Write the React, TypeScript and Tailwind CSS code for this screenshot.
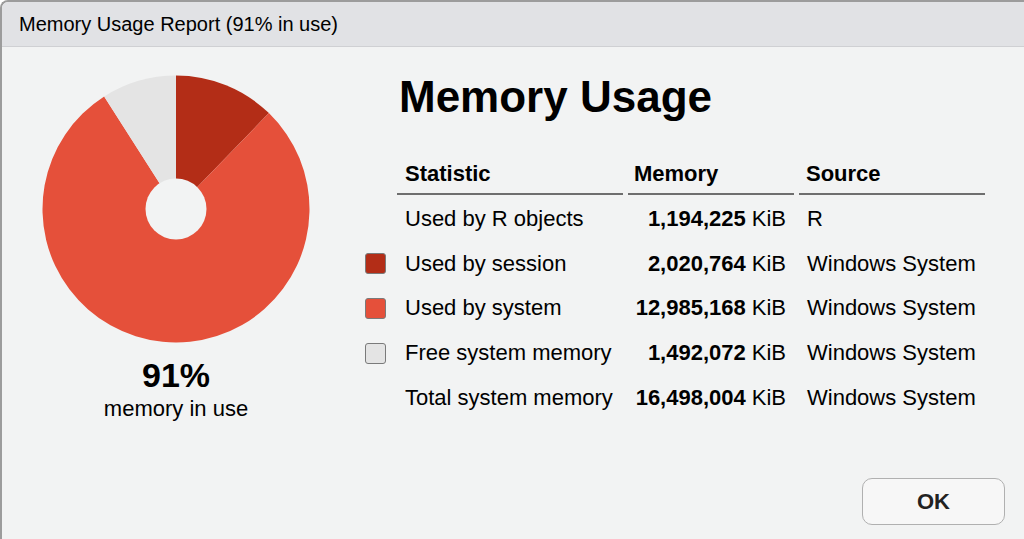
import React from 'react';

// 内存占用数据(KiB)
const TOTAL = 16498004;
const ROWS = [
  { label: 'Used by R objects', value: '1,194,225', source: 'R', swatch: null },
  { label: 'Used by session', value: '2,020,764', source: 'Windows System', swatch: 'bg-[#b32d17]' },
  { label: 'Used by system', value: '12,985,168', source: 'Windows System', swatch: 'bg-[#e5503a]' },
  { label: 'Free system memory', value: '1,492,072', source: 'Windows System', swatch: 'bg-[#e4e4e4]' },
  { label: 'Total system memory', value: '16,498,004', source: 'Windows System', swatch: null },
];

const SLICES = [
  { value: 2020764, color: '#b32d17' },
  { value: 12985168, color: '#e5503a' },
  { value: 1492072, color: '#e4e4e4' },
];

function slicePath(cx: number, cy: number, r: number, a0: number, a1: number) {
  const p = (a: number) => [cx + r * Math.sin(a), cy - r * Math.cos(a)];
  const [x0, y0] = p(a0);
  const [x1, y1] = p(a1);
  const large = a1 - a0 > Math.PI ? 1 : 0;
  return `M${cx},${cy} L${x0},${y0} A${r},${r} 0 ${large} 1 ${x1},${y1} Z`;
}

function Pie() {
  let acc = 0;
  return (
    <svg width="268" height="268" viewBox="0 0 268 268">
      {SLICES.map((s, i) => {
        const a0 = (acc / TOTAL) * Math.PI * 2;
        acc += s.value;
        const a1 = (acc / TOTAL) * Math.PI * 2;
        return <path key={i} d={slicePath(134, 134, 133.5, a0, a1)} fill={s.color} />;
      })}
      <circle cx="134" cy="134" r="30.5" fill="#f2f3f3" />
    </svg>
  );
}

export default function App() {
  return (
    <div className="w-[1026px] h-[541px] overflow-hidden bg-[#f2f3f3] border-t-2 border-l-2 border-[#9c9c9c] rounded-tl-[8px] flex flex-col text-black font-['Liberation_Sans',Arial,sans-serif]">
      {/* 标题栏 */}
      <div className="h-[45px] shrink-0 bg-[#e1e2e5] border-b border-[#cfd0d3] flex items-center pl-[17px] text-[20px] leading-none pb-[1px]">
        Memory Usage Report (91% in use)
      </div>

      <div className="flex flex-1">
        {/* 左侧饼图 */}
        <div className="w-[356px] shrink-0 flex flex-col items-center pt-[28px]">
          <div className="ml-[-8px]">
            <Pie />
          </div>
          <div className="ml-[-8px] mt-[15px] text-[34px] font-bold leading-none">91%</div>
          <div className="ml-[-8px] mt-[6px] text-[22px] leading-none">memory in use</div>
        </div>

        {/* 右侧表格 */}
        <div className="flex flex-col pt-[28px]">
          <h1 className="pl-[41px] text-[44px] font-bold leading-none">Memory Usage</h1>

          <div className="mt-[35px] ml-[7px] grid grid-cols-[27px_226px_166px_186px] gap-x-[5px] text-[22px] leading-none">
            <div />
            <div className="h-[41px] border-b-2 border-[#6e6e6e] flex items-center pl-[8px] font-bold">Statistic</div>
            <div className="h-[41px] border-b-2 border-[#6e6e6e] flex items-center pl-[6px] font-bold">Memory</div>
            <div className="h-[41px] border-b-2 border-[#6e6e6e] flex items-center pl-[7px] font-bold">Source</div>

            {ROWS.map((r, i) => (
              <React.Fragment key={r.label}>
                <div className={`h-[44.6px] flex items-center ${i === 0 ? 'mt-[2px]' : ''}`}>
                  {r.swatch && (
                    <div className={`w-[21px] h-[21px] rounded-[3px] border-[1.5px] border-[#7a7a7a] ${r.swatch}`} />
                  )}
                </div>
                <div className={`h-[44.6px] flex items-center pl-[8px] ${i === 0 ? 'mt-[2px]' : ''}`}>{r.label}</div>
                <div className={`h-[44.6px] flex items-center justify-end pr-[8px] ${i === 0 ? 'mt-[2px]' : ''}`}>
                  <span className="font-bold">{r.value}</span>
                  <span className="ml-[6px]">KiB</span>
                </div>
                <div className={`h-[44.6px] flex items-center pl-[8px] ${i === 0 ? 'mt-[2px]' : ''}`}>{r.source}</div>
              </React.Fragment>
            ))}
          </div>
        </div>
      </div>

      {/* 底部按钮 */}
      <div className="flex justify-end pr-[21px] pb-[16px]">
        <button className="w-[143px] h-[47px] rounded-[10px] border-[1.5px] border-[#b0b0b0] bg-[#f7f7f7] text-[22px] font-bold text-[#222]">
          OK
        </button>
      </div>
    </div>
  );
}
